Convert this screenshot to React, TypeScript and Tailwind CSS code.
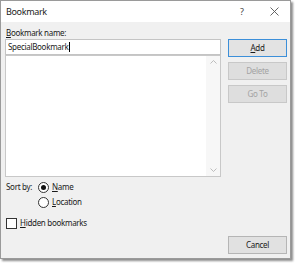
import React from "react";

const Btn = ({ children, disabled, focused }: { children: React.ReactNode; disabled?: boolean; focused?: boolean }) => (
  <div
    className={
      "h-[18px] w-[59px] flex items-center justify-center text-[8px] tracking-[-0.3px] " +
      (disabled
        ? "bg-[#dedede] border border-[#c8c8c8] text-[#a3a3a3]"
        : focused
        ? "bg-[#e3e3e3] border border-[#3c8fd9] text-[#1a1a1a]"
        : "bg-[#e1e1e1] border border-[#b5b5b5] text-[#1a1a1a]")
    }
  >
    {children}
  </div>
);

export default function App() {
  return (
    <div
      className="w-[300px] h-[267px] bg-white relative"
      style={{ fontFamily: '"Noto Sans", "Open Sans", sans-serif' }}
    >
      <div className="w-[291px] h-[259px] border border-[#9a9a9a] flex flex-col shadow-[2px_2px_2px_rgba(0,0,0,0.45)]">
        {/* title bar */}
        <div className="h-[21px] bg-white flex items-center pl-[5px] pr-[9px] shrink-0">
          <span className="text-[9px] tracking-[-0.35px] text-[#222]">Bookmark</span>
          <span className="ml-auto text-[9px] text-[#444] mr-[26px]">?</span>
          <svg width="9" height="9" viewBox="0 0 9 9" className="mr-[2px]">
            <path d="M0.5 0.5 L8.5 8.5 M8.5 0.5 L0.5 8.5" stroke="#555" strokeWidth="0.9" />
          </svg>
        </div>
        {/* body */}
        <div className="flex-1 bg-[#f0f0f0] flex pl-[4px] pr-[2px] text-[8px] tracking-[-0.3px] text-[#1a1a1a]">
          <div className="w-[216px] flex flex-col">
            <div className="h-[17px] pt-[5px] pl-[1px] leading-[11px]">
              <span className="underline underline-offset-1">B</span>ookmark name:
            </div>
            <div className="h-[16px] bg-white border border-[#c4c4c4] flex items-center pl-[2px] leading-none">
              SpecialBookmark<span className="inline-block w-px h-[10px] bg-black ml-[0.5px]" />
            </div>
            <div className="h-[122px] bg-white border border-[#c8c8c8] flex">
              <div className="flex-1" />
              <div className="w-[14px] bg-[#f7f7f7] flex flex-col items-center justify-between py-[4px]">
                <svg width="7" height="4" viewBox="0 0 7 4">
                  <path d="M0.5 3.5 L3.5 0.5 L6.5 3.5" stroke="#b5b5b5" fill="none" strokeWidth="0.9" />
                </svg>
                <svg width="7" height="4" viewBox="0 0 7 4">
                  <path d="M0.5 0.5 L3.5 3.5 L6.5 0.5" stroke="#b5b5b5" fill="none" strokeWidth="0.9" />
                </svg>
              </div>
            </div>
            <div className="flex items-center mt-[3px] h-[14px]">
              <span className="w-[33px] pl-[1px]">Sort by:</span>
              <span className="w-[11px] h-[11px] rounded-full border border-[#333] bg-white flex items-center justify-center">
                <span className="w-[5px] h-[5px] rounded-full bg-[#111]" />
              </span>
              <span className="ml-[3px]">
                <span className="underline underline-offset-1">N</span>ame
              </span>
            </div>
            <div className="flex items-center mt-[1px] h-[14px] pl-[33px]">
              <span className="w-[11px] h-[11px] rounded-full border border-[#333] bg-white" />
              <span className="ml-[3px]">
                <span className="underline underline-offset-1">L</span>ocation
              </span>
            </div>
            <div className="flex items-center mt-[7px] h-[14px] pl-[1px]">
              <span className="w-[11px] h-[11px] border border-[#333] bg-white" />
              <span className="ml-[3px]">
                <span className="underline underline-offset-1">H</span>idden bookmarks
              </span>
            </div>
          </div>
          <div className="ml-[7px] flex flex-col pt-[17px] pb-[4px]">
            <Btn focused>
              <span>
                <span className="underline underline-offset-1">A</span>dd
              </span>
            </Btn>
            <div className="mt-[5px]">
              <Btn disabled>Delete</Btn>
            </div>
            <div className="mt-[5px]">
              <Btn disabled>Go To</Btn>
            </div>
            <div className="mt-auto">
              <Btn>Cancel</Btn>
            </div>
          </div>
        </div>
      </div>
    </div>
  );
}
